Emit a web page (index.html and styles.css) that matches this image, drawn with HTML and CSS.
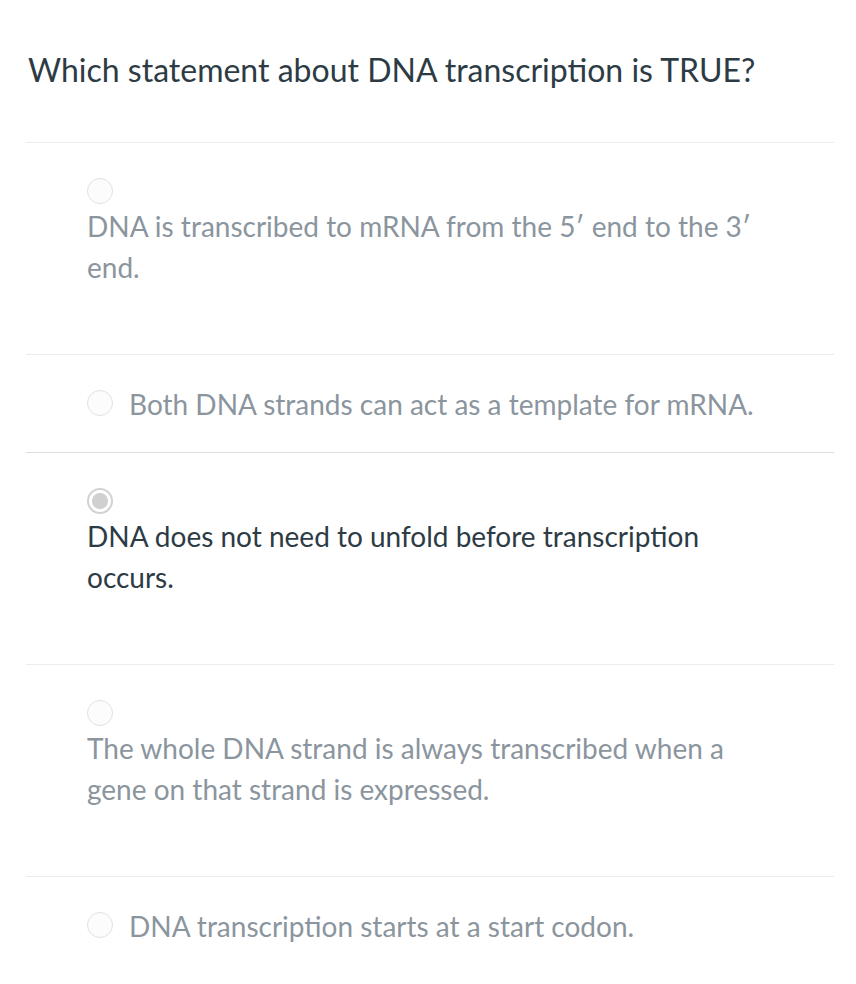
FILE: index.html
```html
<!DOCTYPE html>
<html>
<head>
<meta charset="utf-8">
<link rel="stylesheet" href="styles.css">
</head>
<body>
<div class="question">
  <h1 class="title">Which statement about DNA transcription is TRUE?</h1>
  <div class="answers">
    <div class="option long">
      <span class="radio"></span>
      <span class="text">DNA is transcribed to mRNA from the 5′ end to the 3′ end.</span>
    </div>
    <div class="option">
      <span class="radio"></span>
      <span class="text">Both DNA strands can act as a template for mRNA.</span>
    </div>
    <div class="option long selected">
      <span class="radio"></span>
      <span class="text">DNA does not need to unfold before transcription occurs.</span>
    </div>
    <div class="option long">
      <span class="radio"></span>
      <span class="text">The whole DNA strand is always transcribed when a gene on that strand is expressed.</span>
    </div>
    <div class="option">
      <span class="radio"></span>
      <span class="text">DNA transcription starts at a start codon.</span>
    </div>
  </div>
</div>
</body>
</html>
```

FILE: styles.css
```css
html, body {
  margin: 0;
  padding: 0;
  background: #ffffff;
}

body {
  font-family: Lato, "Open Sans", sans-serif;
  padding: 0 22px 0 26px;
}

.title {
  margin: 0;
  padding: 50px 0 0 2px;
  height: 142px;
  box-sizing: border-box;
  font-size: 32px;
  font-weight: 400;
  line-height: 40px;
  color: #2d3b45;
}

.answers {
  display: flex;
  flex-direction: column;
}

.option {
  display: flex;
  flex-wrap: wrap;
  align-items: flex-start;
  column-gap: 16px;
  padding: 29px 62px 27px 61px;
  border-top: 1px solid #ececec;
  font-size: 28px;
  line-height: 41px;
  color: #8b959e;
}

.option.long {
  padding-bottom: 66px;
}

.option.selected {
  border-top-color: #dddddd;
  color: #2d3b45;
}

.radio {
  flex: none;
  width: 26px;
  height: 26px;
  box-sizing: border-box;
  border-radius: 50%;
  border: 1.5px solid #e2e2e2;
  background: #fcfcfc;
  margin: 6px 0 2px 0;
}

.selected .radio {
  border: 2px solid #d2d2d2;
  background: radial-gradient(circle, #d0d0d0 0, #d0d0d0 7.5px, #ffffff 8.5px);
}

.text {
  flex: 0 1 auto;
}
```
